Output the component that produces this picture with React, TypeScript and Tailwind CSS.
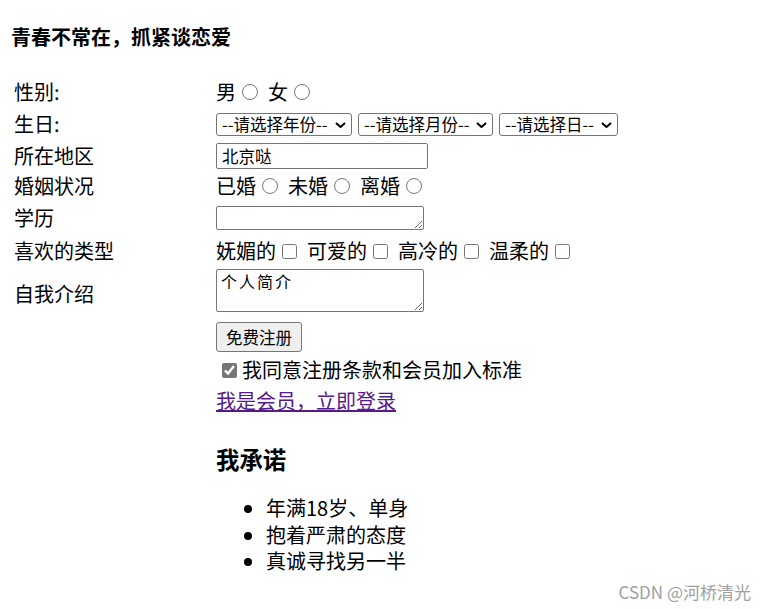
import React from "react";

const font = "font-['Microsoft_YaHei','Noto_Sans_CJK_SC',sans-serif]";

const Row = ({
  label,
  h,
  children,
  top = false,
}: {
  label?: string;
  h: string;
  children: React.ReactNode;
  top?: boolean;
}) => (
  <div className={`flex items-center ${h}`}>
    <div className="w-[206px] shrink-0 pl-[4px]">{label}</div>
    <div className={`flex items-center ${top ? "self-start" : ""}`}>{children}</div>
  </div>
);

const Radio = ({ name }: { name: string }) => (
  <input
    type="radio"
    name={name}
    className="ml-[6px] mr-[4px] h-[16px] w-[16px] accent-[#767676]"
  />
);

const Check = () => (
  <input type="checkbox" className="ml-[6px] mr-[5px] h-[15px] w-[15px] accent-[#767676]" />
);

const Select = ({ text, w }: { text: string; w: string }) => (
  <span className="relative inline-flex">
    <select
      defaultValue=""
      className={`h-[23px] ${w} appearance-none rounded-[3px] border border-[#767676] bg-white pl-[5px] pr-[20px] text-[16.5px] leading-[21px] text-black`}
    >
      <option value="">{text}</option>
    </select>
    <svg
      className="pointer-events-none absolute right-[6px] top-[9px] h-[6px] w-[11px]"
      viewBox="0 0 11 6"
    >
      <path d="M1 1l4.5 4 4.5-4" stroke="#000" strokeWidth="2" fill="none" />
    </svg>
  </span>
);

export default function App() {
  return (
    <div className={`relative min-h-[609px] w-full bg-white text-black ${font} text-[20px] leading-[26px]`}>
      <div className="pl-[11px] pt-[24px]">
        <h4 className="h-[26px] font-bold">青春不常在，抓紧谈恋爱</h4>
      </div>

      <div className="mt-[26px] flex flex-col pl-[10px]">
        <Row label="性别:" h="h-[32px]">
          男<Radio name="sex" />
          <span className="ml-[6px]">女</span>
          <Radio name="sex" />
        </Row>
        <Row label="生日:" h="h-[32px]">
          <div className="flex gap-[6px]">
            <Select text="--请选择年份--" w="w-[136px]" />
            <Select text="--请选择月份--" w="w-[135px]" />
            <Select text="--请选择日--" w="w-[119px]" />
          </div>
        </Row>
        <Row label="所在地区" h="h-[31px]">
          <input
            type="text"
            defaultValue="北京哒"
            className="h-[26px] w-[212px] rounded-[2px] border border-[#767676] px-[5px] text-[16.5px] leading-[20px]"
          />
        </Row>
        <Row label="婚姻状况" h="h-[30px]">
          已婚<Radio name="m" />
          <span className="ml-[6px]">未婚</span>
          <Radio name="m" />
          <span className="ml-[6px]">离婚</span>
          <Radio name="m" />
        </Row>
        <Row label="学历" h="h-[33px]">
          <textarea
            rows={1}
            className="h-[24px] w-[208px] rounded-[2px] border border-[#767676] text-[16px]"
          />
        </Row>
        <Row label="喜欢的类型" h="h-[34px]">
          妩媚的<Check />
          <span className="ml-[5px]">可爱的</span>
          <Check />
          <span className="ml-[5px]">高冷的</span>
          <Check />
          <span className="ml-[5px]">温柔的</span>
          <Check />
        </Row>
        <Row label="自我介绍" h="h-[52px]" top>
          <textarea
            defaultValue="个人简介"
            className="mt-[1px] h-[43px] w-[208px] rounded-[2px] border border-[#767676] px-[4px] pt-[1px] text-[16px] leading-[20px] tracking-[2px]"
          />
        </Row>
        <Row h="h-[33px]">
          <button className="h-[30px] w-[86px] rounded-[3px] border border-[#767676] bg-[#efefef] text-[16.5px] leading-[20px]">
            免费注册
          </button>
        </Row>
        <Row h="h-[34px]">
          <input
            type="checkbox"
            defaultChecked
            className="ml-[6px] mr-[5px] h-[15px] w-[15px] accent-[#767676]"
          />
          我同意注册条款和会员加入标准
        </Row>
        <Row h="h-[28px]">
          <a href="#" className="text-[#551a8b] underline">
            我是会员，立即登录
          </a>
        </Row>
      </div>

      <div className="pl-[216px]">
        <h3 className="mt-[29px] h-[30px] text-[23.4px] font-bold leading-[30px]">我承诺</h3>
        <ul className="mt-[21px] list-disc pl-[50px] leading-[26.5px]">
          <li>年满18岁、单身</li>
          <li>抱着严肃的态度</li>
          <li>真诚寻找另一半</li>
        </ul>
      </div>

      <div className="absolute bottom-[7px] right-[16px] text-[17px] leading-[20px] text-[#a0a0a0]">
        CSDN @河桥清光
      </div>
    </div>
  );
}
